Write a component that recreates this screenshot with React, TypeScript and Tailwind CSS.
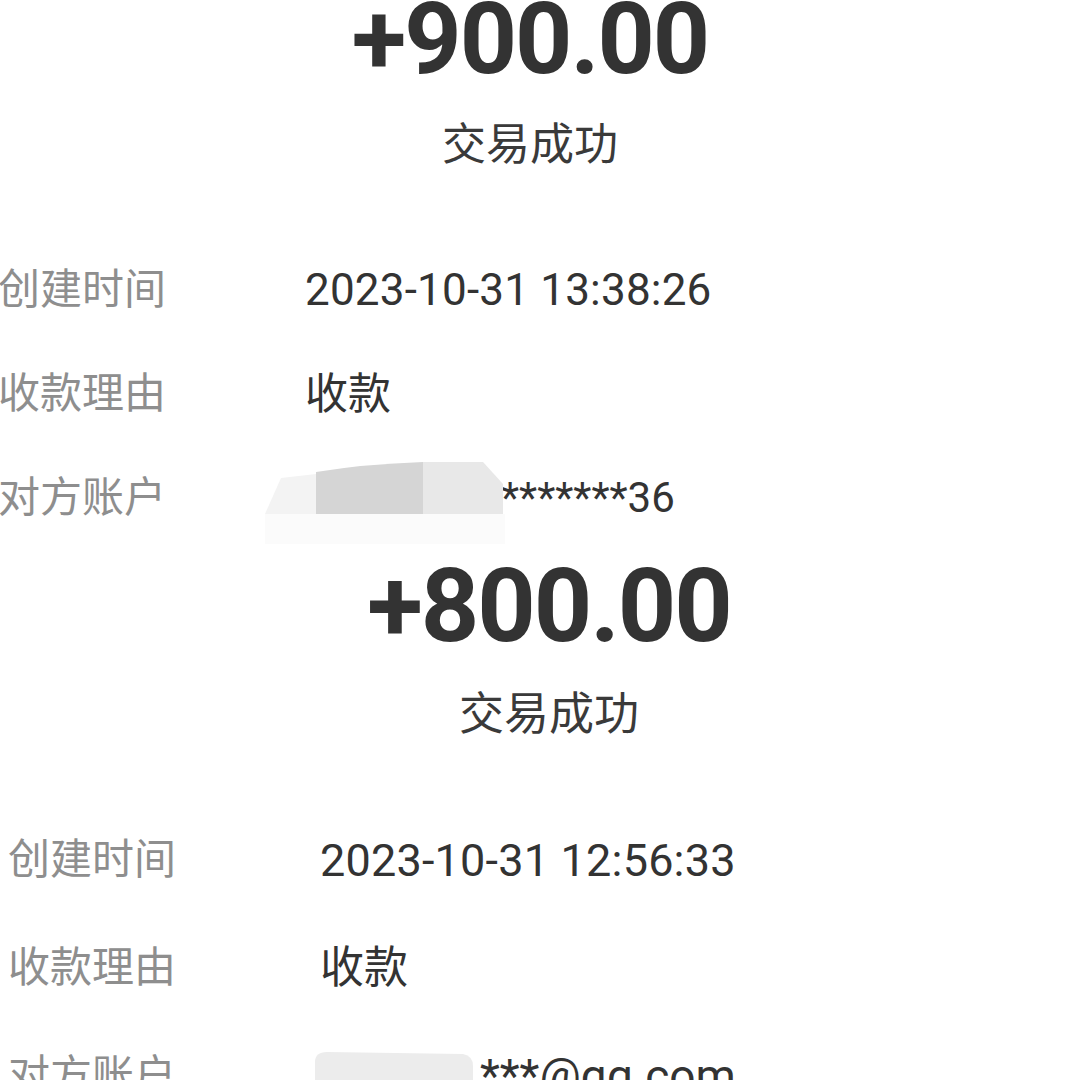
import React from "react";

const font = { fontFamily: 'Roboto, "Noto Sans CJK SC", sans-serif' };

function Row({ label, value, h, vs, children }: { label: string; value?: React.ReactNode; h: string; vs: string; children?: React.ReactNode }) {
  return (
    <div className={`relative flex items-center ${h}`}>
      <div className="w-[var(--lw)] shrink-0 text-[42px] leading-none text-[#8e8e8e]">{label}</div>
      <div className={`${vs} leading-none text-[#333333] whitespace-nowrap`}>{value}</div>
      {children}
    </div>
  );
}

export default function App() {
  return (
    <div className="h-[1080px] w-[1080px] overflow-hidden bg-white" style={font}>
      {/* Block 1 */}
      <div className="w-[1060px]">
        <div className="-mt-[11px] h-[100px] text-center text-[100px] font-bold leading-[100px] tracking-[-0.02em] text-[#333333]">+900.00</div>
        <div className="mt-[26px] h-[60px] text-center text-[44px] leading-[60px] text-[#3a3a3a]">交易成功</div>
        <div className="ml-[-2px] mt-[63px] [--lw:307px]">
          <Row label="创建时间" value="2023-10-31 13:38:26" h="h-[104px]" vs="text-[44px] tracking-[0.2px]" />
          <Row label="收款理由" value="收款" h="h-[104px]" vs="text-[43px]" />
          <Row label="对方账户" value={<span className="ml-[196px]">*******36</span>} h="h-[104px]" vs="text-[42px]">
            <svg className="absolute left-[267px] top-[14px]" width="240" height="86" viewBox="0 0 240 86">
              <rect x="0" y="54" width="240" height="30" fill="#fbfbfb" />
              <path d="M0 54 L16 18 L51 14 L51 54 Z" fill="#f3f3f3" />
              <path d="M51 12 Q100 4 158 2 L158 54 L51 54 Z" fill="#d5d5d5" />
              <path d="M158 2 L218 2 L238 24 L238 54 L158 54 Z" fill="#e8e8e8" />
            </svg>
          </Row>
        </div>
      </div>
      {/* Block 2 */}
      <div className="ml-[18px] w-[1062px]">
        <div className="mt-[6px] h-[100px] text-center text-[102px] font-bold leading-[100px] tracking-[-0.02em] text-[#333333]">+800.00</div>
        <div className="mt-[29px] h-[60px] text-center text-[45px] leading-[60px] text-[#3a3a3a]">交易成功</div>
        <div className="-ml-[10px] mt-[61px] [--lw:312px]">
          <Row label="创建时间" value="2023-10-31 12:56:33" h="h-[108px]" vs="text-[45px] tracking-[0.2px]" />
          <Row label="收款理由" value="收款" h="h-[108px]" vs="text-[44px]" />
          <Row label="对方账户" value={<span className="ml-[160px]">***@qq.com</span>} h="h-[108px]" vs="text-[46px]">
            <svg className="absolute left-[307px] top-[28px]" width="160" height="60" viewBox="0 0 160 60">
              <path d="M0 12 Q0 2 12 2 L148 4 Q158 6 158 16 L158 60 L0 60 Z" fill="#ececec" />
            </svg>
          </Row>
        </div>
      </div>
    </div>
  );
}
